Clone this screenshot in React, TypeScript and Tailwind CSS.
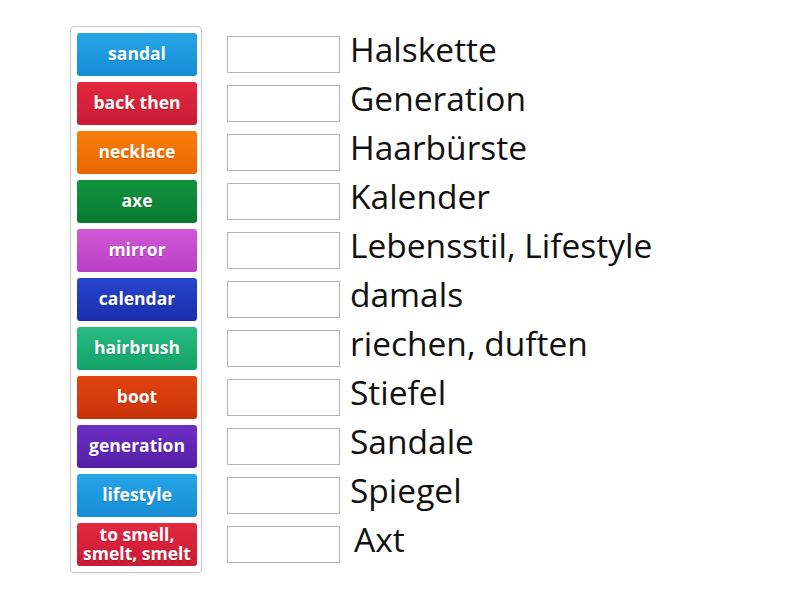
const tiles = [
  { label: "sandal", cls: "from-[#27a6e8] to-[#168cd4]" },
  { label: "back then", cls: "from-[#e3283f] to-[#c91b35]" },
  { label: "necklace", cls: "from-[#f77d0c] to-[#ea6700]" },
  { label: "axe", cls: "from-[#12933e] to-[#097a31]" },
  { label: "mirror", cls: "from-[#d059d8] to-[#b93fc4]" },
  { label: "calendar", cls: "from-[#2645cc] to-[#1a2eac]" },
  { label: "hairbrush", cls: "from-[#25bb81] to-[#15a269]" },
  { label: "boot", cls: "from-[#e2440f] to-[#c9320a]" },
  { label: "generation", cls: "from-[#6d2fc2] to-[#5720a8]" },
  { label: "lifestyle", cls: "from-[#27a6e8] to-[#168cd4]" },
  { label: "to smell, smelt, smelt", cls: "from-[#e3283f] to-[#c91b35]" },
];

const words = [
  "Halskette",
  "Generation",
  "Haarbürste",
  "Kalender",
  "Lebensstil, Lifestyle",
  "damals",
  "riechen, duften",
  "Stiefel",
  "Sandale",
  "Spiegel",
  "Axt",
];

export default function App() {
  return (
    <div className="w-[800px] h-[600px] bg-white flex items-start pl-[70px] pt-[26px] font-['Open_Sans',sans-serif]">
      <div className="w-[132px] border border-[#c8c8c8] rounded-[4px] p-[6px] flex flex-col gap-[6px] shadow-[0_1px_2px_rgba(0,0,0,0.08)]">
        {tiles.map((t) => (
          <div
            key={t.label}
            className={`h-[43px] w-[120px] rounded-[3px] bg-linear-to-b ${t.cls} flex items-center justify-center text-center text-white font-bold text-[17.5px] leading-[19px] pb-[2px] [text-shadow:0_1px_1px_rgba(0,0,0,0.15)]`}
          >
            {t.label}
          </div>
        ))}
      </div>
      <div className="ml-[25px] mt-[10px] flex flex-col gap-[12px]">
        {words.map((w, i) => (
          <div key={w} className="flex items-start h-[37px]">
            <div className="w-[113px] h-[37px] border border-[#b4b4b4] bg-white" />
            <div
              className={`${i === words.length - 1 ? "ml-[14px]" : "ml-[10px]"} text-[33.5px] leading-[27px] text-[#111] whitespace-nowrap`}
            >
              {w}
            </div>
          </div>
        ))}
      </div>
    </div>
  );
}
